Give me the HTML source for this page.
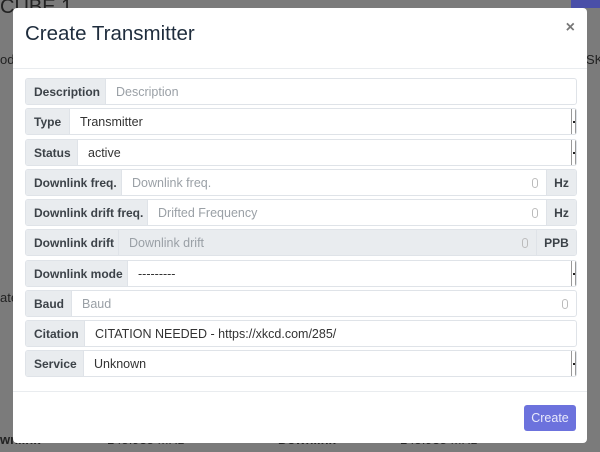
<!DOCTYPE html>
<html><head><style>
*{box-sizing:border-box;margin:0;padding:0}
body{width:600px;height:452px;overflow:hidden;background:#7b7b7b;font-family:"Liberation Sans",sans-serif;position:relative}
.bg{position:absolute;color:#222;font-size:13px}
.modal{position:absolute;left:13px;top:8px;width:574px;height:435px;background:#fff;border-radius:4px}
.title{position:absolute;left:12px;top:14px;font-size:20.5px;color:#1f2d3d}
.x{position:absolute;right:12px;top:11px;font-size:16px;font-weight:bold;color:#777}
.hr{position:absolute;left:0;right:0;height:1px;background:#e9ecef}
.row{position:absolute;left:12px;width:552px;height:27px;border:1px solid #dfe3e8;border-radius:3px;display:flex;font-size:12.5px;overflow:hidden}
.lab{background:#e9ecef;font-weight:bold;font-size:12px;color:#3c4248;padding:0 8px;display:flex;align-items:center;border-right:1px solid #dfe3e8;white-space:nowrap;flex-shrink:0}
.in{flex:1;display:flex;align-items:center;padding:0 10px;color:#333;position:relative;white-space:nowrap}
.ph{color:#9aa0a6}
.dis{background:#e9ecef}
.app{background:#e9ecef;font-weight:bold;font-size:12px;color:#3c4248;display:flex;align-items:center;justify-content:center;border-left:1px solid #dfe3e8;flex-shrink:0}
.spin{position:absolute;right:8px;top:8px;width:6px;height:10px;border:1px solid #bbb;border-radius:3px}
.sel{position:absolute;right:0;top:0;width:5px;height:25px;border-left:1px solid #999;border-right:1px solid #999}
.sel:after{content:"";position:absolute;left:1px;top:12px;width:2px;height:2px;background:#222}
.btn{position:absolute;left:511px;top:397px;width:52px;height:26px;background:#6c72dd;color:#e8e9fb;border-radius:3px;font-size:12.5px;display:flex;align-items:center;justify-content:center}
</style></head><body>
<div class="bg" style="left:0;top:-4px;font-size:20px;color:#222">CUBE 1</div>
<div class="bg" style="left:0;top:52px">ode</div>
<div class="bg" style="left:586px;top:52px">SK</div>
<div class="bg" style="left:0;top:290px">ate</div>
<div class="bg" style="left:0;top:432px;font-weight:bold">wnlink</div>
<div class="bg" style="left:107px;top:432px">145.935 MHz</div>
<div class="bg" style="left:278px;top:432px;font-weight:bold">Downlink</div>
<div class="bg" style="left:400px;top:432px">145.935 MHz</div>
<div style="position:absolute;left:571px;top:0;width:29px;height:8px;background:#4a4fa8"></div>
<div class="modal">
<div class="title">Create Transmitter</div>
<div class="x">×</div>
<div class="hr" style="top:60px"></div>
<div class="row" style="top:70px"><div class="lab" style="width:80px">Description</div><div class="in ph">Description</div></div>
<div class="row" style="top:100px"><div class="lab" style="width:44px">Type</div><div class="in">Transmitter<span class="sel"></span></div></div>
<div class="row" style="top:131px"><div class="lab" style="width:52px">Status</div><div class="in">active<span class="sel"></span></div></div>
<div class="row" style="top:161px"><div class="lab" style="width:96px">Downlink freq.</div><div class="in ph">Downlink freq.<span class="spin"></span></div><div class="app" style="width:30px">Hz</div></div>
<div class="row" style="top:191px"><div class="lab" style="width:122px">Downlink drift freq.</div><div class="in ph">Drifted Frequency<span class="spin"></span></div><div class="app" style="width:30px">Hz</div></div>
<div class="row" style="top:221px"><div class="lab" style="width:93px">Downlink drift</div><div class="in ph dis">Downlink drift<span class="spin"></span></div><div class="app" style="width:40px">PPB</div></div>
<div class="row" style="top:252px"><div class="lab" style="width:102px">Downlink mode</div><div class="in">---------<span class="sel"></span></div></div>
<div class="row" style="top:282px"><div class="lab" style="width:46px">Baud</div><div class="in ph">Baud<span class="spin"></span></div></div>
<div class="row" style="top:312px"><div class="lab" style="width:59px">Citation</div><div class="in">CITATION NEEDED - https://xkcd.com/285/</div></div>
<div class="row" style="top:342px"><div class="lab" style="width:58px">Service</div><div class="in">Unknown<span class="sel"></span></div></div>
<div class="hr" style="top:383px"></div>
<div class="btn">Create</div>
</div>
</body></html>
